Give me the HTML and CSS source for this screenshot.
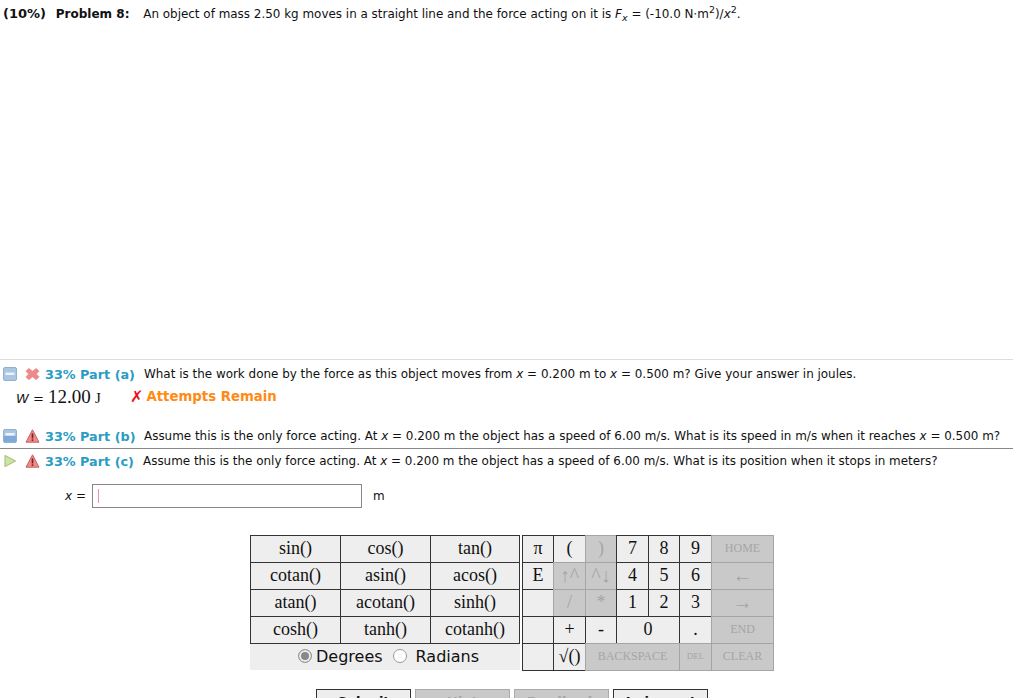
FILE: index.html
```html
<!DOCTYPE html>
<html lang="en">
<head>
    <meta charset="UTF-8">
    <title>Problem 8</title>
    <link rel="stylesheet" href="styles.css">
</head>
<body>
    <div class="problem">
        <b class="num">(10%)</b> <b class="title">Problem 8:</b>
        <span>An object of mass 2.50 kg moves in a straight line and the force acting on it is <i>F<sub>x</sub></i> = (-10.0 N⋅m<sup>2</sup>)/<i>x</i><sup>2</sup>.</span>
    </div>

    <div class="part part-a">
        <svg class="tog" viewBox="0 0 14 14"><rect x="0.5" y="0.5" width="13" height="13" rx="1.5" fill="#a9c6e2" stroke="#8fb0d0"/><rect x="2.5" y="5.5" width="9" height="2.5" fill="#eef3f8"/></svg>
        <svg class="stat" viewBox="0 0 16 14"><path d="M4 1 L8 4 L12 1 L15 4 L12 7 L15 10 L12 13 L8 10 L4 13 L1 10 L4 7 L1 4 Z" fill="#f08a8a" stroke="#dd7a7a" stroke-width="0.6" stroke-linejoin="round"/></svg>
        <b class="pct">33% Part (a)</b>
        <span class="q">What is the work done by the force as this object moves from <i>x</i> = 0.200 m to <i>x</i> = 0.500 m? Give your answer in joules.</span>
    </div>
    <div class="answer">
        <span class="ans-val"><i>W</i> = <span class="serif">12.00</span> <span class="unit">J</span></span>
        <span class="cross">✗</span>
        <b class="remain">Attempts Remain</b>
    </div>

    <div class="part part-b">
        <svg class="tog" viewBox="0 0 14 14"><rect x="0.5" y="0.5" width="13" height="13" rx="1.5" fill="#a9c6e2" stroke="#8fb0d0"/><rect x="1" y="7" width="12" height="6" fill="#7ea9d8"/><rect x="2.5" y="4" width="9" height="2.5" fill="#eef3f8"/></svg>
        <svg class="stat" viewBox="0 0 14 14"><path d="M7 0.8 L13.5 13.2 H0.5 Z" fill="#ee8a8a" stroke="#c96060" stroke-linejoin="round"/><rect x="6.2" y="4.5" width="1.6" height="5" fill="#7a1f1f"/><rect x="6.2" y="10.3" width="1.6" height="1.6" fill="#7a1f1f"/></svg>
        <b class="pct">33% Part (b)</b>
        <span class="q">Assume this is the only force acting. At <i>x</i> = 0.200 m the object has a speed of 6.00 m/s. What is its speed in m/s when it reaches <i>x</i> = 0.500 m?</span>
    </div>
    <div class="part part-c">
        <svg class="tog" viewBox="0 0 14 14"><path d="M2 1.5 L12.5 7 L2 12.5 Z" fill="#cfe3a6" stroke="#a9c77c" stroke-width="1.2" stroke-linejoin="round"/></svg>
        <svg class="stat" viewBox="0 0 14 14"><path d="M7 0.8 L13.5 13.2 H0.5 Z" fill="#ee8a8a" stroke="#c96060" stroke-linejoin="round"/><rect x="6.2" y="4.5" width="1.6" height="5" fill="#7a1f1f"/><rect x="6.2" y="10.3" width="1.6" height="1.6" fill="#7a1f1f"/></svg>
        <b class="pct">33% Part (c)</b>
        <span class="q">Assume this is the only force acting. At <i>x</i> = 0.200 m the object has a speed of 6.00 m/s. What is its position when it stops in meters?</span>
    </div>

    <div class="entry">
        <label class="entry-label"><i>x</i> =</label>
        <div class="entry-box"><span class="caret"></span></div>
        <span class="entry-unit">m</span>
    </div>

    <div class="keypad">
        <div class="funcs">
            <div class="key">sin()</div><div class="key">cos()</div><div class="key">tan()</div>
            <div class="key">cotan()</div><div class="key">asin()</div><div class="key">acos()</div>
            <div class="key">atan()</div><div class="key">acotan()</div><div class="key">sinh()</div>
            <div class="key">cosh()</div><div class="key">tanh()</div><div class="key">cotanh()</div>
            <div class="modes">
                <span class="radio on"></span><span class="mode-text">Degrees</span>
                <span class="radio"></span><span class="mode-text">Radians</span>
            </div>
        </div>
        <div class="pad">
            <div class="key">π</div><div class="key">(</div><div class="key off">)</div><div class="key">7</div><div class="key">8</div><div class="key">9</div><div class="key off small">HOME</div>
            <div class="key">E</div><div class="key off arrow">↑^</div><div class="key off arrow">^↓</div><div class="key">4</div><div class="key">5</div><div class="key">6</div><div class="key off arrow">←</div>
            <div class="key"></div><div class="key off">/</div><div class="key off">*</div><div class="key">1</div><div class="key">2</div><div class="key">3</div><div class="key off arrow">→</div>
            <div class="key"></div><div class="key">+</div><div class="key">-</div><div class="key wide">0</div><div class="key">.</div><div class="key off small">END</div>
            <div class="key"></div><div class="key">√()</div><div class="key off wider small">BACKSPACE</div><div class="key off tiny">DEL</div><div class="key off small">CLEAR</div>
        </div>
    </div>

    <div class="actions">
        <div class="btn">Submit</div>
        <div class="btn off">Hint</div>
        <div class="btn off">Feedback</div>
        <div class="btn">I give up!</div>
    </div>
</body>
</html>
```

FILE: styles.css
```css
html, body {
    height: 698px;
    overflow: hidden;
}
body {
    margin: 0;
    font-family: "DejaVu Sans", sans-serif;
    font-size: 11.95px;
    color: #111;
    background: #fff;
}
sub, sup {
    font-size: 9.5px;
    line-height: 0;
}
.problem {
    height: 360px;
    box-sizing: border-box;
    padding: 5px 0 0 3px;
    border-bottom: 1px solid #ddd;
    line-height: 17px;
    white-space: nowrap;
}
.num {
    font-size: 13px;
    margin-right: 6px;
}
.title {
    font-size: 12px;
    margin-right: 10px;
}
.part {
    display: flex;
    align-items: center;
    white-space: nowrap;
    height: 24px;
}
.part-a {
    margin-top: 2px;
}
.part-b {
    margin-top: 17px;
    height: 24px;
    border-bottom: 1px solid #888;
}
.part-c {
    height: 24px;
}
.part-c .pct {
    margin-right: 8px;
}
.tog {
    width: 14px;
    height: 14px;
    margin-left: 3px;
    flex: none;
}
.stat {
    width: 15px;
    height: 14px;
    margin-left: 8px;
    flex: none;
}
.pct {
    font-size: 12.8px;
    color: #2a9cc4;
    margin-left: 5px;
    margin-right: 9px;
    width: 90px;
    flex: none;
}
.answer {
    display: flex;
    align-items: center;
    height: 21px;
    padding-left: 16px;
    white-space: nowrap;
}
.ans-val {
    font-size: 13px;
    width: 114px;
}
.serif {
    font-family: "Liberation Serif", serif;
    font-size: 19px;
}
.unit {
    font-family: "Liberation Serif", serif;
    font-size: 15px;
}
.cross {
    font-size: 16px;
    font-weight: bold;
    color: #e8141c;
    margin-right: 3px;
}
.remain {
    font-size: 13.3px;
    color: #ff8a14;
}
.entry {
    display: flex;
    align-items: center;
    height: 24px;
    margin-top: 11px;
}
.entry-label {
    width: 86px;
    text-align: right;
    margin-right: 6px;
}
.entry-box {
    height: 22px;
    border: 1px solid #888;
    display: flex;
    align-items: center;
    padding-left: 5px;
    margin-right: 11px;
    flex: none;
    width: 263px;
}
.caret {
    width: 1px;
    height: 14px;
    background: #f28aa8;
}
.keypad {
    display: flex;
    margin: 27px 0 0 250px;
    font-family: "Liberation Serif", serif;
    font-size: 18px;
}
.funcs {
    display: grid;
    grid-template-columns: 90px 90px 89px;
    grid-auto-rows: 27px;
    width: 270px;
}
.pad {
    display: grid;
    grid-template-columns: 31px 32px 31px 32px 31px 32px 62px;
    grid-auto-rows: 27px;
    margin-left: 2px;
}
.key {
    display: flex;
    align-items: center;
    justify-content: center;
    box-sizing: border-box;
    padding-bottom: 2px;
    border: 1px solid #333;
    background: #eee;
    color: #111;
    margin: 0 -1px -1px 0;
}
.off {
    background: #c9c9c9;
    border-color: #a5a5a5;
    color: #a5a5a5;
}
.small {
    font-size: 12px;
}
.tiny {
    font-size: 9px;
}
.arrow {
    font-size: 20px;
}
.wide {
    grid-column: span 2;
}
.wider {
    grid-column: span 3;
}
.modes {
    grid-column: span 3;
    display: flex;
    align-items: center;
    padding: 0 0 2px 48px;
    background: #eee;
    margin-top: 1px;
    margin-right: -1px;
    font-family: "DejaVu Sans", sans-serif;
    font-size: 16px;
}
.radio {
    width: 14px;
    height: 14px;
    box-sizing: border-box;
    border: 1px solid #999;
    border-radius: 50%;
    background: #fff;
    margin-right: 4px;
    flex: none;
}
.radio.on {
    background: #888;
    box-shadow: inset 0 0 0 2px #eee;
}
.mode-text {
    margin-right: 10px;
}
.mode-text + .radio + .mode-text {
    margin-left: 5px;
}
.actions {
    display: flex;
    gap: 4px;
    margin: 19px 0 0 316px;
}
.btn {
    width: 95px;
    height: 30px;
    box-sizing: border-box;
    border: 1px solid #333;
    background: #eee;
    text-align: center;
    font-weight: bold;
    font-size: 13px;
    line-height: 24px;
}
.btn.off {
    background: #c9c9c9;
    border-color: #aaa;
    color: #a5a5a5;
}
```
